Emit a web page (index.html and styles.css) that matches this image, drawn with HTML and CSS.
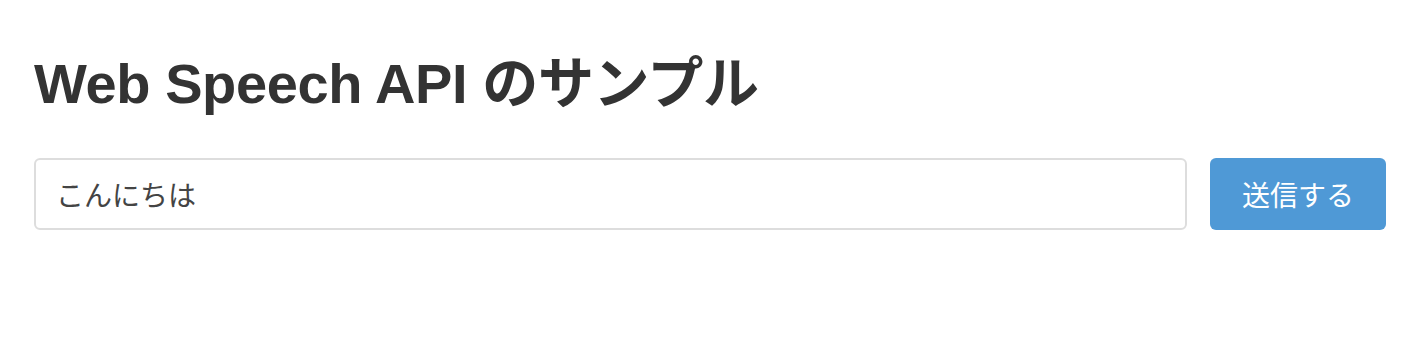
FILE: index.html
```html
<!DOCTYPE html>
<html>
<head>
    <title>Web Speech API のサンプル</title>
    <link rel="stylesheet" href="styles.css">
</head>
<body>

<div class="container">
    <h1>Web Speech API のサンプル</h1>

    <form class="speech-form" onsubmit="return speak()">
        <input type="text" id="speechText" class="text-input" value="こんにちは">
        <button type="submit" class="btn-send">送信する</button>
    </form>
</div>

<script>
function speak() {
    const text = document.getElementById('speechText').value;
    if ('speechSynthesis' in window) {
        const utter = new SpeechSynthesisUtterance(text);
        utter.lang = 'ja-JP';
        window.speechSynthesis.speak(utter);
    }
    return false;
}
</script>

</body>
</html>
```

FILE: styles.css
```css
body { margin: 0; font-family: "Liberation Sans", "Noto Sans CJK JP", sans-serif; color: #333; background: #fff; }
.container { padding: 0 28px 0 34px; }
h1 { margin: 53px 0 43px; font-size: 56px; line-height: 1.1; font-weight: bold; letter-spacing: -0.4px; }
.speech-form { display: flex; gap: 23px; margin: 0; }
.text-input { flex: 1; height: 72px; box-sizing: border-box; padding: 0 20px; border: 2px solid #ddd; border-radius: 6px; font-family: inherit; font-size: 28px; color: #444; outline: none; }
.btn-send { width: 176px; height: 72px; padding: 0; border: none; border-radius: 6px; background-color: #4f99d6; color: #fff; font-family: inherit; font-size: 28px; cursor: pointer; }
```
